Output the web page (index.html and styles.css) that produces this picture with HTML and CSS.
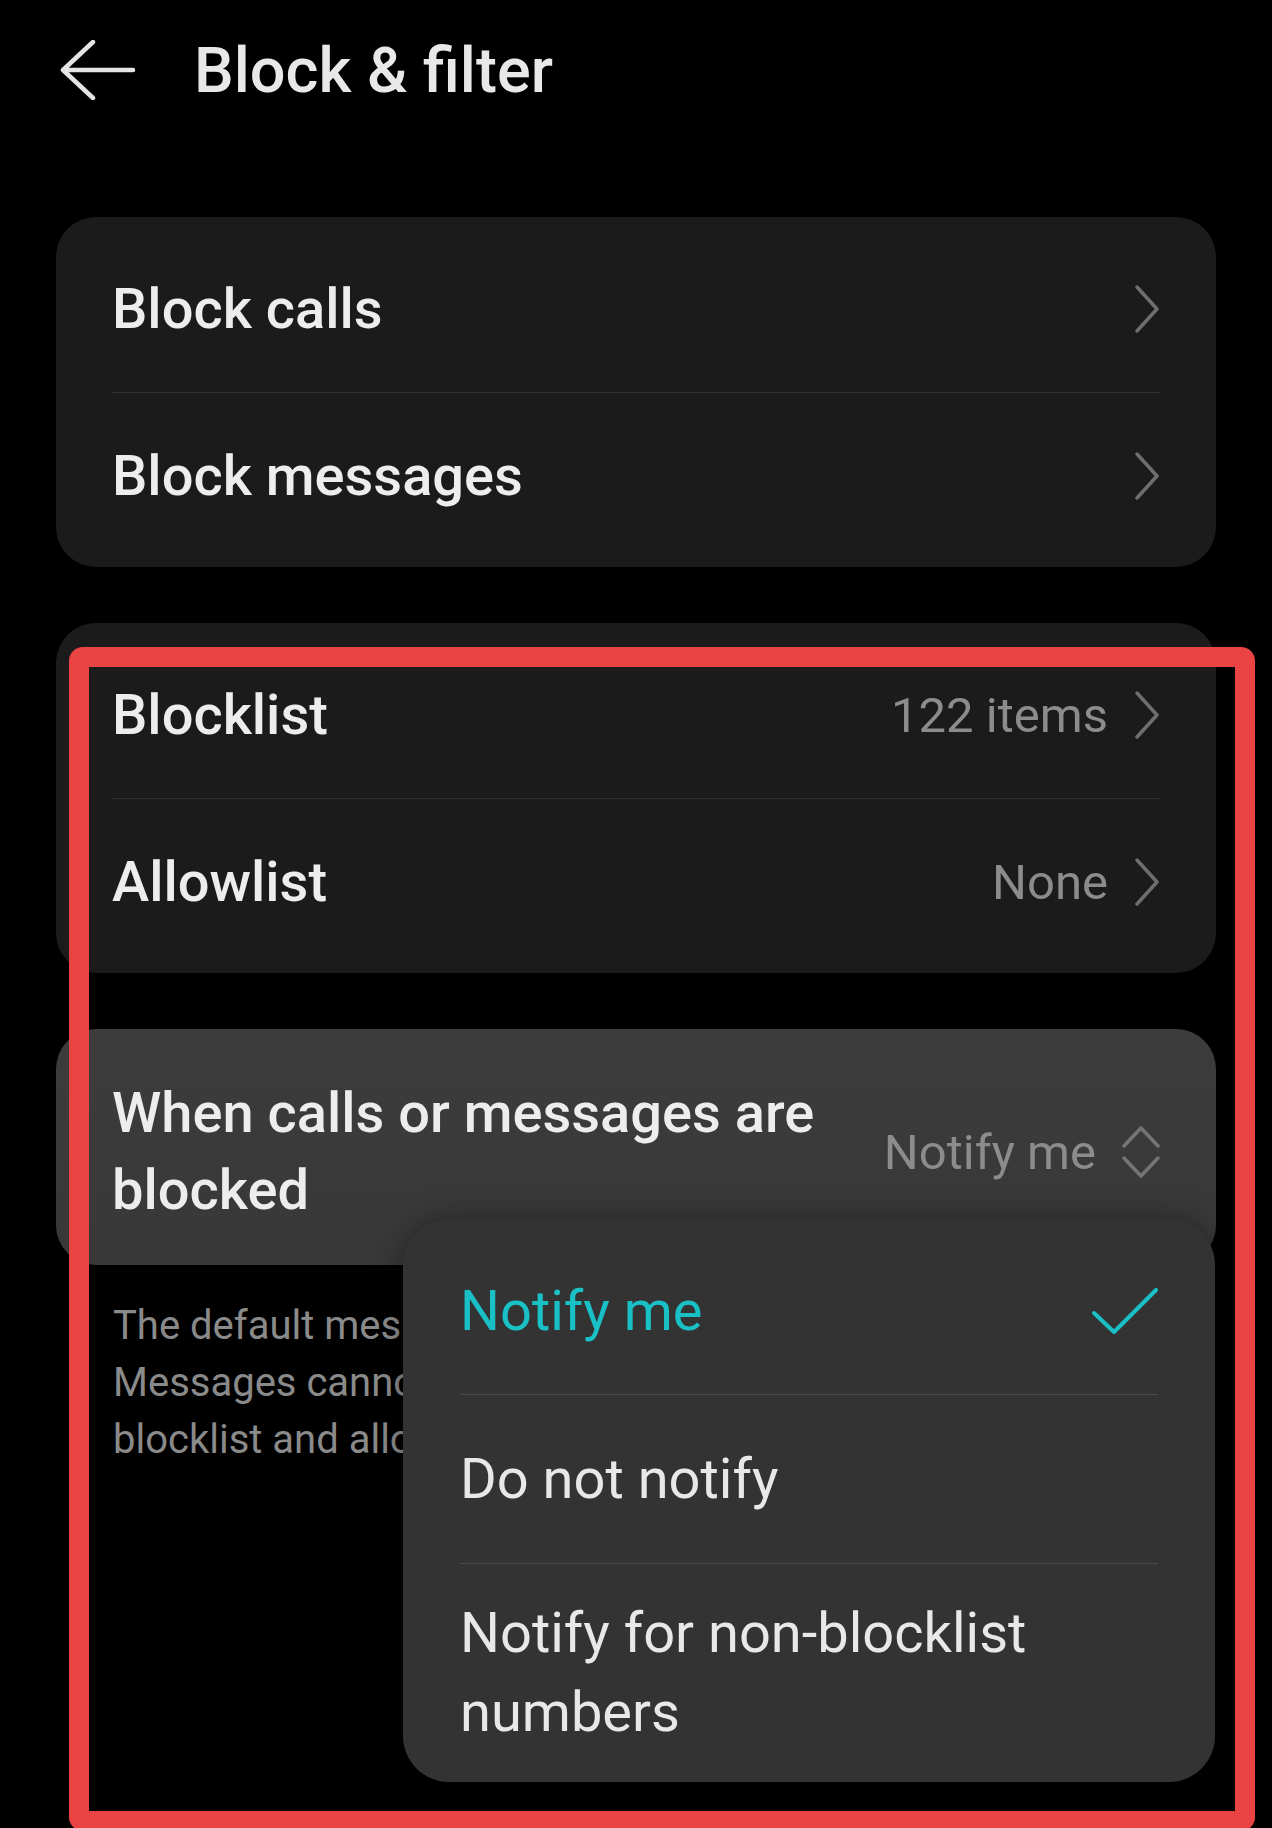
FILE: index.html
```html
<!DOCTYPE html>
<html lang="en">

<head>
    <meta charset="UTF-8">
    <meta name="viewport" content="width=device-width, initial-scale=1.0">
    <title>Block &amp; filter</title>
    <link rel="stylesheet" href="styles.css">
</head>

<body>
    <div class="screen">

        <!-- Üst bar -->
        <header class="top-bar">
            <svg class="back-icon" width="76" height="60" viewBox="0 0 76 60">
                <path d="M73 30 H4 M33 2 L3 30 L33 58" fill="none" stroke="#e4e4e4" stroke-width="4.5" stroke-linecap="round" stroke-linejoin="round"/>
            </svg>
            <h1>Block &amp; filter</h1>
        </header>

        <main class="content">
            <section class="card">
                <div class="row">
                    <span class="label">Block calls</span>
                    <svg class="chevron" width="26" height="48" viewBox="0 0 26 48">
                        <path d="M3 2 L23 24 L3 46" fill="none" stroke="#6e6e6e" stroke-width="3.5" stroke-linecap="round" stroke-linejoin="round"/>
                    </svg>
                </div>
                <div class="row">
                    <span class="label">Block messages</span>
                    <svg class="chevron" width="26" height="48" viewBox="0 0 26 48">
                        <path d="M3 2 L23 24 L3 46" fill="none" stroke="#6e6e6e" stroke-width="3.5" stroke-linecap="round" stroke-linejoin="round"/>
                    </svg>
                </div>
            </section>

            <section class="card">
                <div class="row">
                    <span class="label">Blocklist</span>
                    <span class="value">122 items</span>
                    <svg class="chevron" width="26" height="48" viewBox="0 0 26 48">
                        <path d="M3 2 L23 24 L3 46" fill="none" stroke="#6e6e6e" stroke-width="3.5" stroke-linecap="round" stroke-linejoin="round"/>
                    </svg>
                </div>
                <div class="row">
                    <span class="label">Allowlist</span>
                    <span class="value">None</span>
                    <svg class="chevron" width="26" height="48" viewBox="0 0 26 48">
                        <path d="M3 2 L23 24 L3 46" fill="none" stroke="#6e6e6e" stroke-width="3.5" stroke-linecap="round" stroke-linejoin="round"/>
                    </svg>
                </div>
            </section>

            <section class="card card-pressed">
                <div class="row row-select">
                    <span class="label">When calls or messages are blocked</span>
                    <span class="value">Notify me</span>
                    <svg class="updown" width="38" height="54" viewBox="0 0 38 54">
                        <path d="M2 21 L19 3 L36 21 M2 33 L19 51 L36 33" fill="none" stroke="#757575" stroke-width="3.5" stroke-linecap="round" stroke-linejoin="round"/>
                    </svg>
                </div>
            </section>

            <!-- menü açıkken sağ tarafı altında kalıyor -->
            <p class="note">
                <span>The default messaging app must be used</span>
                <span>Messages cannot be blocked for numbers</span>
                <span>blocklist and allowlist.</span>
            </p>
        </main>

        <!-- Seçim menüsü -->
        <div class="popup-menu">
            <div class="menu-item selected">
                <span>Notify me</span>
                <svg width="66" height="46" viewBox="0 0 66 46">
                    <path d="M2 25 L22 44 L64 2" fill="none" stroke="#19c1c6" stroke-width="4" stroke-linecap="round" stroke-linejoin="round"/>
                </svg>
            </div>
            <div class="menu-item">
                <span>Do not notify</span>
            </div>
            <div class="menu-item multi">
                <span>Notify for non-blocklist<br>numbers</span>
            </div>
        </div>

        <!-- Kırmızı çerçeve -->
        <div class="highlight-frame"></div>

    </div>
</body>

</html>
```

FILE: styles.css
```css
html, body {
    margin: 0;
    padding: 0;
    background-color: #000;
}

body {
    font-family: Roboto, "Noto Sans", Arial, sans-serif;
    color: #ececec;
}

.screen {
    position: relative;
    width: 1272px;
    height: 1828px;
    overflow: hidden;
    background-color: #000;
}

/* Üst bar */
.top-bar {
    display: flex;
    align-items: center;
    height: 140px;
    padding-left: 60px;
}

.top-bar h1 {
    margin: 0 0 0 58px;
    font-size: 63px;
    font-weight: 500;
    color: #e8e8e8;
}

/* Kartlar */
.content {
    display: flex;
    flex-direction: column;
    gap: 56px;
    padding: 77px 56px 0;
}

.card {
    background-color: #1b1b1b;
    border-radius: 40px;
    padding: 9px 0 8px;
}

.row {
    display: flex;
    align-items: center;
    min-height: 166px;
    margin: 0 56px;
}

.row + .row {
    border-top: 1px solid #323232;
}

.label {
    flex: 1;
    font-size: 56px;
    font-weight: 500;
    color: #ededed;
}

.value {
    margin-right: 26px;
    font-size: 49px;
    color: #8c8c8c;
}

.chevron, .updown {
    flex-shrink: 0;
}

.card-pressed {
    background: linear-gradient(180deg, #3c3c3c, #383838);
    padding: 46px 0 36px;
}

.row-select {
    min-height: 0;
}

.row-select .label {
    line-height: 77px;
    padding-right: 40px;
}

.note {
    display: flex;
    flex-direction: column;
    width: 290px;
    margin: -24px 0 0;
    padding: 0 0 0 57px;
    overflow: hidden;
    white-space: nowrap;
    font-size: 40px;
    line-height: 57px;
    color: #8a8a8a;
}

/* Açılır menü */
.popup-menu {
    position: absolute;
    left: 403px;
    top: 1219px;
    width: 812px;
    padding-top: 8px;
    background-color: #333;
    border-radius: 46px;
    box-shadow: 0 0 30px rgba(0, 0, 0, 0.35);
}

.menu-item {
    display: flex;
    align-items: center;
    justify-content: space-between;
    min-height: 167px;
    margin: 0 57px;
    font-size: 56px;
    color: #e8e8e8;
}

.menu-item + .menu-item {
    border-top: 1px solid #4a4a4a;
    min-height: 168px;
}

.menu-item.selected {
    color: #19c1c6;
}

.menu-item.multi {
    padding: 30px 0;
    line-height: 79px;
    min-height: 0;
}

/* Kırmızı vurgu çerçevesi */
.highlight-frame {
    position: absolute;
    left: 69px;
    top: 647px;
    width: 1146px;
    height: 1144px;
    border: 20px solid #e94343;
    border-radius: 14px;
}
```
